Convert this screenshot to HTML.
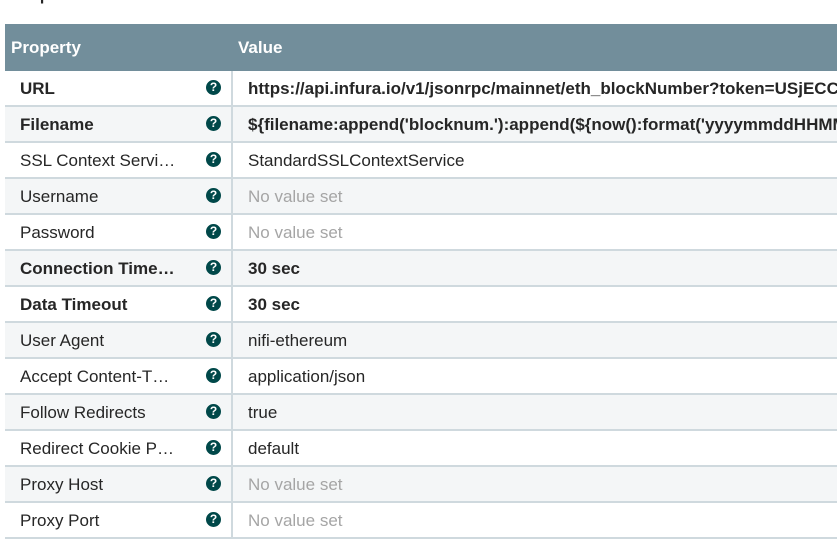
<!DOCTYPE html>
<html><head><style>
body{margin:0;width:837px;height:547px;overflow:hidden;background:#fff;font-family:"Liberation Sans",sans-serif;position:relative}
.req{position:absolute;left:14px;top:-13px;font-size:16px;font-weight:bold;color:#262626}
.hdr{position:absolute;left:5px;top:24px;width:840px;height:47px;background:#728e9b;color:#fff;font-weight:bold;font-size:17px}
.hdr span{position:absolute;top:14px}
.row{position:absolute;left:5px;width:840px;height:34px;border-bottom:2px solid #cfd9de;font-size:17px;color:#262626}
.row.g{background:#f4f6f7}
.row .n{position:absolute;left:15px;top:8px;white-space:nowrap}
.row .v{position:absolute;left:243px;top:8px;white-space:nowrap}
.row .d{position:absolute;left:226px;top:0;width:2px;height:36px;background:#cfd9de}
.row .q{position:absolute;left:201px;top:9px;width:15px;height:15px;border-radius:50%;background:#004849;color:#fff;font-size:12px;font-weight:bold;text-align:center;line-height:15px}
.b{font-weight:bold}
.e{color:#a5a5a5}
</style></head><body>
<div class="req">Required field</div>
<div class="hdr"><span style="left:6px">Property</span><span style="left:233px">Value</span></div>
<div class="row" style="top:71px"><span class="n b">URL</span><span class="q">?</span><span class="d"></span><span class="v b">https://api.infura.io/v1/jsonrpc/mainnet/eth_blockNumber?token=USjECC</span></div>
<div class="row g" style="top:107px"><span class="n b">Filename</span><span class="q">?</span><span class="d"></span><span class="v b">${filename:append('blocknum.'):append(${now():format('yyyymmddHHMM</span></div>
<div class="row" style="top:143px"><span class="n">SSL Context Servi…</span><span class="q">?</span><span class="d"></span><span class="v">StandardSSLContextService</span></div>
<div class="row g" style="top:179px"><span class="n">Username</span><span class="q">?</span><span class="d"></span><span class="v e">No value set</span></div>
<div class="row" style="top:215px"><span class="n">Password</span><span class="q">?</span><span class="d"></span><span class="v e">No value set</span></div>
<div class="row g" style="top:251px"><span class="n b">Connection Time…</span><span class="q">?</span><span class="d"></span><span class="v b">30 sec</span></div>
<div class="row" style="top:287px"><span class="n b">Data Timeout</span><span class="q">?</span><span class="d"></span><span class="v b">30 sec</span></div>
<div class="row g" style="top:323px"><span class="n">User Agent</span><span class="q">?</span><span class="d"></span><span class="v">nifi-ethereum</span></div>
<div class="row" style="top:359px"><span class="n">Accept Content-T…</span><span class="q">?</span><span class="d"></span><span class="v">application/json</span></div>
<div class="row g" style="top:395px"><span class="n">Follow Redirects</span><span class="q">?</span><span class="d"></span><span class="v">true</span></div>
<div class="row" style="top:431px"><span class="n">Redirect Cookie P…</span><span class="q">?</span><span class="d"></span><span class="v">default</span></div>
<div class="row g" style="top:467px"><span class="n">Proxy Host</span><span class="q">?</span><span class="d"></span><span class="v e">No value set</span></div>
<div class="row" style="top:503px"><span class="n">Proxy Port</span><span class="q">?</span><span class="d"></span><span class="v e">No value set</span></div>
</body></html>
